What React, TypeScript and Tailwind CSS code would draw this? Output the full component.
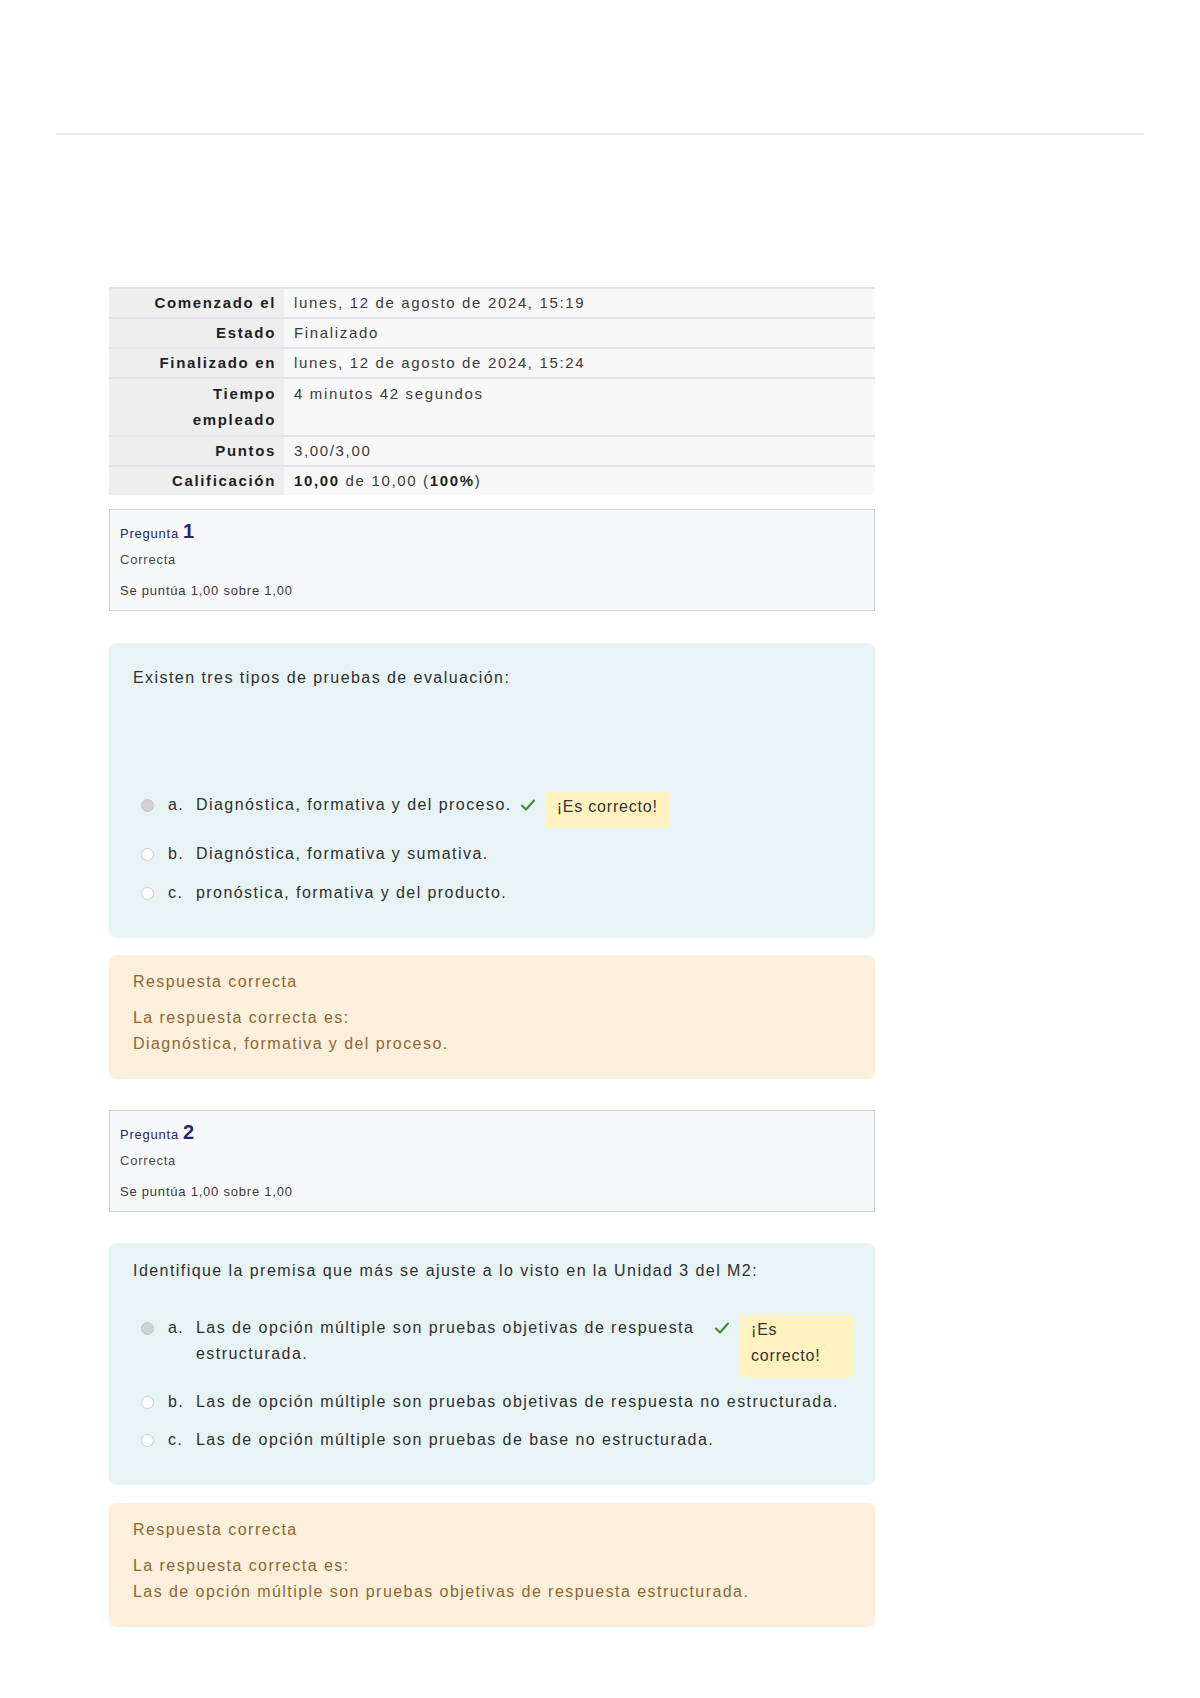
import React from "react";

const Check = () => (
  <svg width="16" height="14" viewBox="0 0 16 14" className="shrink-0 mt-[6px]">
    <path d="M2 7.5 L6 11.5 L14 2.5" fill="none" stroke="#3d8a2f" strokeWidth="2" strokeLinecap="round" strokeLinejoin="round" />
  </svg>
);

const Radio = ({ checked }: { checked?: boolean }) => (
  <span
    className={
      checked
        ? "shrink-0 mt-[7px] w-[13px] h-[13px] rounded-full border border-[#c4c4c4] bg-[#d2d2d2]"
        : "shrink-0 mt-[7px] w-[13px] h-[13px] rounded-full border border-[#cfcfcf] bg-white"
    }
  />
);

const Row = ({ label, children, tall }: { label: React.ReactNode; children: React.ReactNode; tall?: boolean }) => (
  <div className="flex border-t-2 border-[#e1e4e9]">
    <div className={"w-[175px] shrink-0 bg-[#eeeeee] text-right pr-[8px] font-bold text-[#1f1f1f] leading-[26px] tracking-[0.11em] " + (tall ? "py-[2px]" : "py-[1px]")}>
      {label}
    </div>
    <div className={"flex-1 bg-[#f8f8f8] pl-[10px] text-[#3a3a3a] leading-[26px] tracking-[0.11em] " + (tall ? "py-[2px]" : "py-[1px]")}>
      {children}
    </div>
  </div>
);

const InfoBox = ({ n }: { n: string }) => (
  <div className="border border-[#cdd2d9] bg-[#f8f9fa] px-[10px] pt-[8px] pb-[9px]">
    <div className="leading-[26px] h-[26px] flex items-baseline">
      <span className="text-[13px] text-[#2a2670] tracking-[0.06em]">Pregunta</span>
      <span className="ml-[4px] text-[20px] font-bold text-[#2a2670]">{n}</span>
    </div>
    <div className="mt-[6px] text-[13px] leading-[20px] text-[#4a4a4a] tracking-[0.06em]">Correcta</div>
    <div className="mt-[11px] text-[13px] leading-[20px] text-[#3a3a3a] tracking-[0.06em]">Se puntúa 1,00 sobre 1,00</div>
  </div>
);

const Feedback = ({ answer }: { answer: string }) => (
  <div className="rounded-[7px] bg-[#fcefdc] text-[#8b6731] px-[24px] pt-[14px] pb-[22px] leading-[26px] text-[16px] tracking-[0.09em]">
    <div>Respuesta correcta</div>
    <div className="mt-[10px]">La respuesta correcta es:</div>
    <div>{answer}</div>
  </div>
);

export default function App() {
  return (
    <div className="w-[1200px] min-h-[1698px] bg-white font-['Liberation_Sans',Arial,sans-serif] text-[15px]">
      <div className="h-[133px]" />
      <div className="mx-[56px] h-[2px] bg-[#e8e8eb]" />
      <div className="ml-[109px] w-[766px] pt-[152px]">
        {/* Summary table */}
        <div className="text-[15px]">
          <Row label="Comenzado el">lunes, 12 de agosto de 2024, 15:19</Row>
          <Row label="Estado">Finalizado</Row>
          <Row label="Finalizado en">lunes, 12 de agosto de 2024, 15:24</Row>
          <Row label={<>Tiempo<br />empleado</>} tall>4 minutos 42 segundos</Row>
          <Row label="Puntos">3,00/3,00</Row>
          <Row label="Calificación">
            {" "}<b className="text-[#1f1f1f]">10,00</b> de 10,00 (<b className="text-[#1f1f1f]">100%</b>)
          </Row>
        </div>

        {/* Question 1 */}
        <div className="mt-[14px]">
          <InfoBox n="1" />
        </div>
        <div className="mt-[32px] rounded-[7px] bg-[#e7f3f5] px-[24px] pt-[22px] pb-[32px] text-[16px] text-[#2f2f2f] leading-[26px] tracking-[0.09em]">
          <div>Existen tres tipos de pruebas de evaluación:</div>
          <div className="mt-[101px] pl-[8px] flex flex-col gap-[13px]">
            <div className="flex items-start">
              <Radio checked />
              <span className="w-[28px] ml-[14px] shrink-0">a.</span>
              <span>Diagnóstica, formativa y del proceso.</span>
              <span className="ml-[8px]"><Check /></span>
              <span className="ml-[9px] bg-[#fff2bf] px-[12px] pt-[2px] pb-[8px] text-[#333] tracking-[0.05em]">¡Es correcto!</span>
            </div>
            <div className="flex items-start">
              <Radio />
              <span className="w-[28px] ml-[14px] shrink-0">b.</span>
              <span>Diagnóstica, formativa y sumativa.</span>
            </div>
            <div className="flex items-start">
              <Radio />
              <span className="w-[28px] ml-[14px] shrink-0">c.</span>
              <span>pronóstica, formativa y del producto.</span>
            </div>
          </div>
        </div>
        <div className="mt-[17px]">
          <Feedback answer="Diagnóstica, formativa y del proceso." />
        </div>

        {/* Question 2 */}
        <div className="mt-[31px]">
          <InfoBox n="2" />
        </div>
        <div className="mt-[31px] rounded-[7px] bg-[#e7f3f5] px-[24px] pt-[15px] pb-[32px] text-[16px] text-[#2f2f2f] leading-[26px] tracking-[0.09em]">
          <div>Identifique la premisa que más se ajuste a lo visto en la Unidad 3 del M2:</div>
          <div className="mt-[31px] pl-[8px] flex flex-col gap-[12px]">
            <div className="flex items-start">
              <Radio checked />
              <span className="w-[28px] ml-[14px] shrink-0">a.</span>
              <span className="w-[512px] shrink-0">Las de opción múltiple son pruebas objetivas de respuesta estructurada.</span>
              <span className="ml-[6px]"><Check /></span>
              <span className="ml-[9px] w-[115px] shrink-0 bg-[#fff2bf] px-[12px] pt-[2px] pb-[8px] text-[#333] tracking-[0.05em]">¡Es correcto!</span>
            </div>
            <div className="flex items-start">
              <Radio />
              <span className="w-[28px] ml-[14px] shrink-0">b.</span>
              <span>Las de opción múltiple son pruebas objetivas de respuesta no estructurada.</span>
            </div>
            <div className="flex items-start">
              <Radio />
              <span className="w-[28px] ml-[14px] shrink-0">c.</span>
              <span>Las de opción múltiple son pruebas de base no estructurada.</span>
            </div>
          </div>
        </div>
        <div className="mt-[18px]">
          <Feedback answer="Las de opción múltiple son pruebas objetivas de respuesta  estructurada." />
        </div>
      </div>
    </div>
  );
}
